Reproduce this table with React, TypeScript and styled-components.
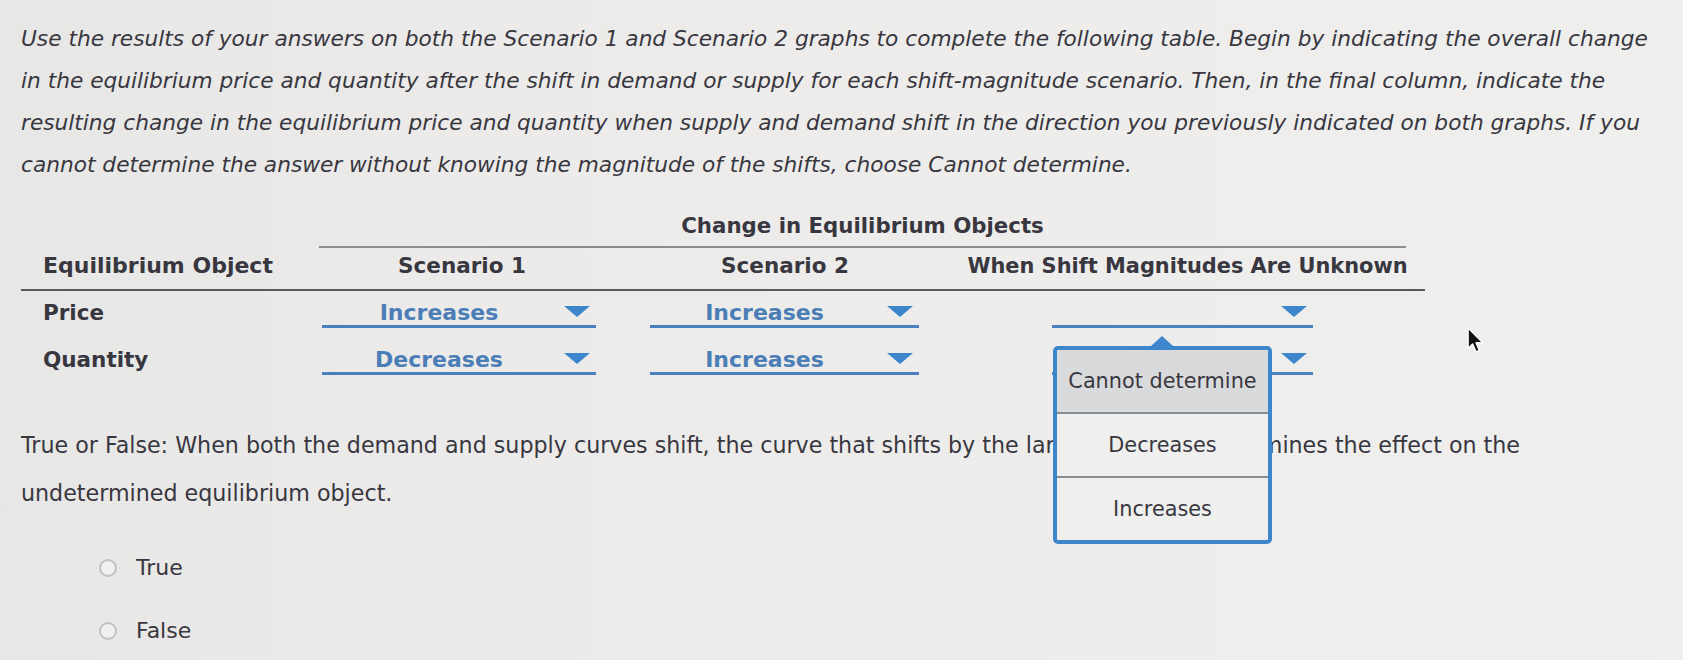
import React from 'react';
import styled, { createGlobalStyle } from 'styled-components';

const GlobalStyle = createGlobalStyle`
  html, body {
    margin: 0;
    padding: 0;
    background: #ecebea;
  }
  body {
    font-family: "DejaVu Sans", Verdana, sans-serif;
    color: #38373f;
  }
`;

const Page = styled.div`
  position: relative;
  box-sizing: border-box;
  width: 1683px;
  height: 660px;
  overflow: hidden;
  padding: 18px 0 0 21px;
  background: linear-gradient(90deg, #e7e7e6 0%, #ecebea 30%, #efefee 100%);
`;

const Intro = styled.p`
  margin: 0;
  font-style: italic;
  font-size: 21.7px;
  line-height: 42px;
  white-space: nowrap;
`;

const Table = styled.table`
  margin-top: 28px;
  width: 1404px;
  border-collapse: collapse;
  table-layout: fixed;
`;

const SpanHead = styled.th`
  padding: 0;
  font-size: 21.3px;
  font-weight: bold;
  line-height: 24px;
  text-align: center;
`;

const SpanTitle = styled.div`
  margin: 0 19px 0 15px;
  padding-bottom: 8px;
  border-bottom: 2px solid #8d8d8f;
`;

const HeadCell = styled.th<{ align?: string; size?: number }>`
  padding: 6px 0 11px;
  padding-left: ${p => (p.align === 'left' ? '22px' : '0')};
  font-size: ${p => p.size || 21.5}px;
  font-weight: bold;
  line-height: 24px;
  text-align: ${p => p.align || 'center'};
  white-space: nowrap;
  border-bottom: 2px solid #59595c;
`;

const LabelCell = styled.td`
  padding: 10px 0 0 22px;
  vertical-align: top;
  font-size: 21.5px;
  font-weight: bold;
  line-height: 24px;
`;

const SelectCell = styled.td`
  padding: 0;
  vertical-align: top;
`;

const Select = styled.div<{ width: number; offset: number }>`
  position: relative;
  box-sizing: border-box;
  width: ${p => p.width}px;
  margin: 0 0 10px ${p => p.offset}px;
  padding-top: 10px;
  display: flex;
  align-items: center;
  border-bottom: 3px solid #4a80bd;
`;

const SelectValue = styled.span`
  flex: 1;
  padding-right: 40px;
  text-align: center;
  font-size: 22px;
  font-weight: bold;
  line-height: 24px;
  height: 24px;
  color: #4b7eb6;
`;

const Caret = styled.span`
  position: absolute;
  right: 6px;
  top: 15px;
  width: 0;
  height: 0;
  border-left: 13px solid transparent;
  border-right: 13px solid transparent;
  border-top: 11px solid #3d86cb;
`;

const Popup = styled.div`
  position: absolute;
  left: 1px;
  top: 55px;
  z-index: 5;
  width: 219px;
  box-sizing: border-box;
  border: 4px solid #3d86cb;
  border-radius: 5px;
  background: #efefee;

  &::before {
    content: '';
    position: absolute;
    left: 94px;
    top: -14px;
    border-left: 11px solid transparent;
    border-right: 11px solid transparent;
    border-bottom: 10px solid #3d86cb;
  }
`;

const Option = styled.div<{ active?: boolean }>`
  height: 62px;
  display: flex;
  align-items: center;
  justify-content: center;
  font-size: 20.8px;
  color: #38373f;
  background: ${p => (p.active ? '#d8dadb' : 'transparent')};
  & + & {
    border-top: 2px solid #878c96;
  }
`;

const Question = styled.p`
  margin: 36px 0 0;
  font-size: 22.2px;
  line-height: 48px;
  white-space: nowrap;
`;

const Choices = styled.div`
  margin-top: 39px;
  padding-left: 78px;
  display: flex;
  flex-direction: column;
  gap: 39px;
`;

const Choice = styled.label`
  display: flex;
  align-items: center;
  gap: 19px;
  font-size: 22px;
  line-height: 24px;
`;

const RadioDot = styled.span`
  box-sizing: border-box;
  width: 18px;
  height: 18px;
  border-radius: 50%;
  border: 2px solid #c2c2c3;
  background: #f0f0ef;
`;

const Cursor = styled.svg`
  position: absolute;
  left: 1467px;
  top: 327px;
  z-index: 10;
`;

type Row = { label: string; values: string[]; open?: boolean };

const rows: Row[] = [
  { label: 'Price', values: ['Increases', 'Increases', ''], open: true },
  { label: 'Quantity', values: ['Decreases', 'Increases', ''] },
];

const widths = [274, 269, 261];
const offsets = [18, 30, 102];
const options = ['Cannot determine', 'Decreases', 'Increases'];

export default function App() {
  return (
    <>
      <GlobalStyle />
      <Page>
        <Intro>
          Use the results of your answers on both the Scenario 1 and Scenario 2 graphs to complete the following table. Begin by indicating the overall change
          <br />
          in the equilibrium price and quantity after the shift in demand or supply for each shift-magnitude scenario. Then, in the final column, indicate the
          <br />
          resulting change in the equilibrium price and quantity when supply and demand shift in the direction you previously indicated on both graphs. If you
          <br />
          cannot determine the answer without knowing the magnitude of the shifts, choose Cannot determine.
        </Intro>

        <Table>
          <colgroup>
            <col style={{ width: 283 }} />
            <col style={{ width: 316 }} />
            <col style={{ width: 330 }} />
            <col style={{ width: 475 }} />
          </colgroup>
          <thead>
            <tr>
              <th />
              <SpanHead colSpan={3}>
                <SpanTitle>Change in Equilibrium Objects</SpanTitle>
              </SpanHead>
            </tr>
            <tr>
              <HeadCell align="left" size={22}>Equilibrium Object</HeadCell>
              <HeadCell>Scenario 1</HeadCell>
              <HeadCell>Scenario 2</HeadCell>
              <HeadCell size={20.9}>When Shift Magnitudes Are Unknown</HeadCell>
            </tr>
          </thead>
          <tbody>
            {rows.map(row => (
              <tr key={row.label}>
                <LabelCell>{row.label}</LabelCell>
                {row.values.map((v, i) => (
                  <SelectCell key={i}>
                    <Select width={widths[i]} offset={offsets[i]}>
                      <SelectValue>{v}</SelectValue>
                      <Caret />
                      {row.open && i === 2 && (
                        <Popup>
                          {options.map((o, j) => (
                            <Option key={o} active={j === 0}>
                              {o}
                            </Option>
                          ))}
                        </Popup>
                      )}
                    </Select>
                  </SelectCell>
                ))}
              </tr>
            ))}
          </tbody>
        </Table>

        <Question>
          True or False: When both the demand and supply curves shift, the curve that shifts by the largest amount determines the effect on the
          <br />
          undetermined equilibrium object.
        </Question>

        <Choices>
          <Choice>
            <RadioDot />
            True
          </Choice>
          <Choice>
            <RadioDot />
            False
          </Choice>
        </Choices>

        <Cursor width="18" height="27" viewBox="0 0 16 24">
          <path d="M1 1 L1 19 L5 15 L8 22 L11 21 L8 14 L14 14 Z" fill="#111" stroke="#fff" strokeWidth="1.2" strokeLinejoin="round" />
        </Cursor>
      </Page>
    </>
  );
}
